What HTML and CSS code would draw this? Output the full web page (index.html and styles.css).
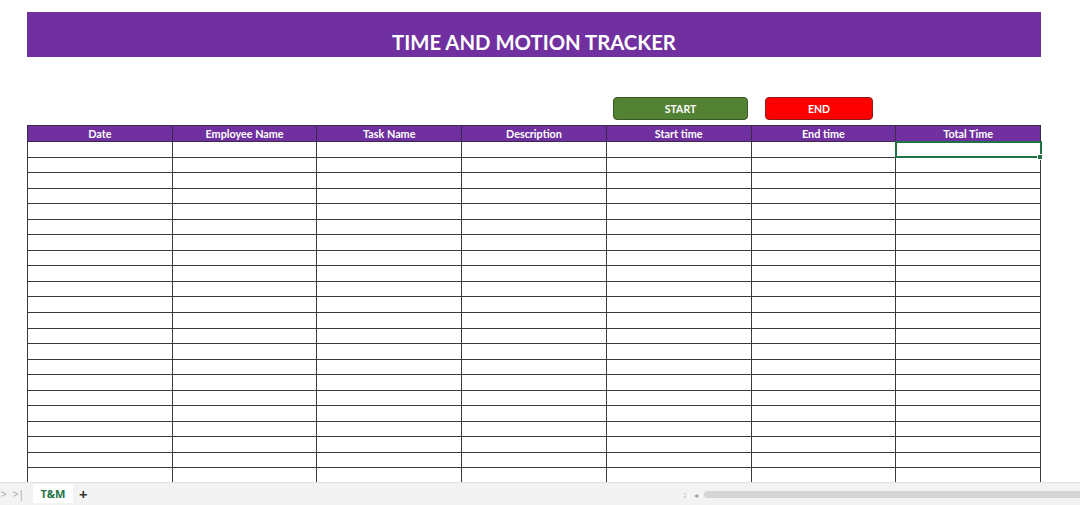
FILE: index.html
```html
<!DOCTYPE html>
<html>
<head>
<meta charset="utf-8">
<link rel="stylesheet" href="styles.css">
</head>
<body>
<div class="app">
  <div class="sheet">
    <div class="banner">TIME AND MOTION TRACKER</div>
    <div class="actions">
      <div class="btn btn-start">START</div>
      <div class="btn btn-end">END</div>
    </div>
    <table class="grid">
      <colgroup>
        <col class="c"><col class="c"><col class="c"><col class="c"><col class="c"><col class="c"><col class="c">
      </colgroup>
      <thead>
        <tr>
          <th>Date</th><th>Employee Name</th><th>Task Name</th><th>Description</th><th>Start time</th><th>End time</th><th>Total Time</th>
        </tr>
      </thead>
      <tbody id="rows"></tbody>
    </table>
  </div>
  <div class="tabbar">
    <div class="nav"><span class="nav-next">&gt;</span><span class="nav-last">&gt;|</span></div>
    <div class="tab">T&amp;M</div>
    <div class="add">+</div>
    <div class="spacer"></div>
    <div class="hs-ctl"><span class="sep">⁞</span><span class="arrow">◂</span></div>
    <div class="hscroll"></div>
  </div>
</div>
<script src="script.js"></script>
</body>
</html>
```
FILE: script.js
```js
var tb = document.getElementById('rows');
var html = '';
for (var i = 0; i < 24; i++) {
  html += '<tr>';
  for (var j = 0; j < 7; j++) {
    html += (i === 0 && j === 6) ? '<td class="sel"><span class="handle"></span></td>' : '<td></td>';
  }
  html += '</tr>';
}
tb.innerHTML = html;
```
FILE: styles.css
```css
html, body {
  margin: 0;
  padding: 0;
  background: #ffffff;
  font-family: "Lato", "Open Sans", sans-serif;
}
.app {
  width: 1080px;
  height: 505px;
  display: flex;
  flex-direction: column;
  overflow: hidden;
}
.sheet {
  height: 483px;
  overflow: hidden;
  padding: 12px 0 0 27px;
  box-sizing: border-box;
}
.banner {
  width: 1014px;
  height: 45px;
  background: #7030a0;
  color: #ffffff;
  font-weight: 700;
  font-size: 20.3px;
  display: flex;
  align-items: flex-end;
  justify-content: center;
  padding-bottom: 3px;
  box-sizing: border-box;
}
.actions {
  display: flex;
  gap: 17px;
  padding-left: 586px;
  margin-top: 40px;
  height: 23px;
}
.btn {
  height: 23px;
  box-sizing: border-box;
  border-radius: 4px;
  color: #ffffff;
  font-size: 10.5px;
  font-weight: 700;
  display: flex;
  align-items: center;
  justify-content: center;
}
.btn-start {
  width: 135px;
  background: #548235;
  border: 1px solid #385723;
}
.btn-end {
  width: 108px;
  background: #ff0000;
  border: 1px solid #8b1a1a;
}
.grid {
  margin-top: 5px;
  border-collapse: collapse;
  table-layout: fixed;
  width: 1014px;
}
.grid col.c {
  width: 14.2857%;
}
.grid th, .grid td {
  border: 1px solid #3a3a3a;
  padding: 0;
  box-sizing: border-box;
}
.grid th {
  background: #7030a0;
  color: #ffffff;
  font-size: 10.8px;
  font-weight: 700;
  height: 16px;
  line-height: 13px;
  border-color: #3a2a4a;
}
.grid td {
  height: 15.55px;
}
.grid td.sel {
  position: relative;
  outline: 2px solid #217346;
  outline-offset: -1px;
}
.handle {
  position: absolute;
  right: -3px;
  bottom: -3px;
  width: 4px;
  height: 4px;
  background: #217346;
  border: 1px solid #ffffff;
}
.tabbar {
  height: 22px;
  background: #f3f3f3;
  border-top: 1px solid #e0e0e0;
  display: flex;
  align-items: center;
  font-family: "Open Sans", "Liberation Sans", sans-serif;
}
.nav {
  width: 32px;
  display: flex;
  gap: 6px;
  color: #a0a0a0;
  font-size: 10px;
  margin-left: 1px;
  box-sizing: border-box;
}
.tab {
  width: 40px;
  height: 19px;
  background: #ffffff;
  color: #217346;
  font-weight: 700;
  font-size: 11px;
  display: flex;
  align-items: center;
  justify-content: center;
  margin-top: -1px;
}
.add {
  margin-left: 6px;
  font-size: 15px;
  font-weight: 700;
  color: #333333;
  line-height: 1;
}
.spacer {
  flex: 1;
}
.hs-ctl {
  display: flex;
  gap: 8px;
  color: #9a9a9a;
  font-size: 8px;
  margin-right: 6px;
}
.hscroll {
  width: 376px;
  height: 7px;
  background: #d4d4d4;
  border-radius: 4px 0 0 4px;
}
```
